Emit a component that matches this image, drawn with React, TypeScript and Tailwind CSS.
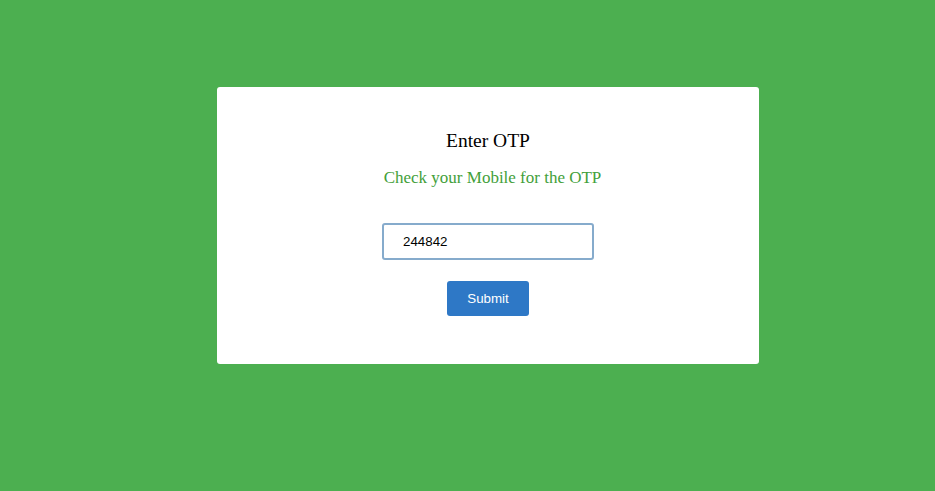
export default function App() {
  return (
    <main className="min-h-[491px] w-full bg-[#4caf50] pt-[87px] pl-[217px]">
      <div className="flex w-[542px] h-[277px] flex-col items-center rounded-[3px] bg-white pt-[42px]">
        <h2 className="text-[19.5px] leading-[24px] text-black font-['Liberation_Serif',serif]">Enter OTP</h2>
        <p className="mt-[15px] pl-[9px] text-[17px] leading-[20px] text-[#43a03a] font-['Liberation_Serif',serif]">
          Check your Mobile for the OTP
        </p>
        <input
          type="text"
          defaultValue="244842"
          className="mt-[35px] h-[37px] w-[212px] rounded-[3px] border-2 border-[#86abcc] bg-white px-[19px] text-[13.33px] text-black outline-none font-['Liberation_Sans',sans-serif]"
        />
        <button className="mt-[21px] h-[35px] w-[82px] rounded-[3px] bg-[#2e78c6] text-[13.33px] text-white font-['Liberation_Sans',sans-serif]">
          Submit
        </button>
      </div>
    </main>
  );
}
